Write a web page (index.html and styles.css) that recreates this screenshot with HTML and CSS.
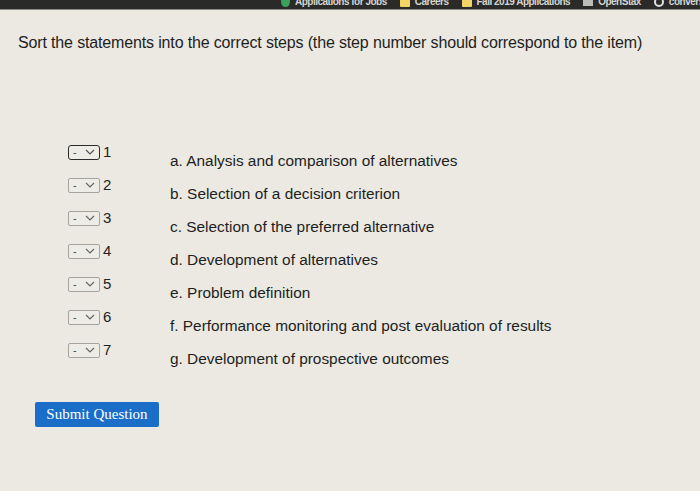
FILE: index.html
```html
<!DOCTYPE html>
<html>
<head>
<meta charset="utf-8">
<link rel="stylesheet" href="styles.css">
</head>
<body>
<div class="bookmarks">
  <div class="bm-inner">
    <span class="bm"><span class="ic-green"></span>Applications for Jobs</span>
    <span class="bm"><span class="ic-folder"></span>Careers</span>
    <span class="bm"><span class="ic-folder"></span>Fall 2019 Applications</span>
    <span class="bm"><span class="ic-grey"></span>OpenStax</span>
    <span class="bm"><span class="ic-circle"></span>conversion</span>
  </div>
</div>
<div class="page">
  <h1 class="title">Sort the statements into the correct steps (the step number should correspond to the item)</h1>
  <div class="sorter">
    <div class="steps">
      <div class="step"><span class="sel focus"><span class="dash">-</span><svg class="chev" viewBox="0 0 10 6"><path d="M1 1 L5 5 L9 1" fill="none" stroke="#555" stroke-width="1.2"/></svg></span><span class="num">1</span></div>
      <div class="step"><span class="sel"><span class="dash">-</span><svg class="chev" viewBox="0 0 10 6"><path d="M1 1 L5 5 L9 1" fill="none" stroke="#666" stroke-width="1.2"/></svg></span><span class="num">2</span></div>
      <div class="step"><span class="sel"><span class="dash">-</span><svg class="chev" viewBox="0 0 10 6"><path d="M1 1 L5 5 L9 1" fill="none" stroke="#666" stroke-width="1.2"/></svg></span><span class="num">3</span></div>
      <div class="step"><span class="sel"><span class="dash">-</span><svg class="chev" viewBox="0 0 10 6"><path d="M1 1 L5 5 L9 1" fill="none" stroke="#666" stroke-width="1.2"/></svg></span><span class="num">4</span></div>
      <div class="step"><span class="sel"><span class="dash">-</span><svg class="chev" viewBox="0 0 10 6"><path d="M1 1 L5 5 L9 1" fill="none" stroke="#666" stroke-width="1.2"/></svg></span><span class="num">5</span></div>
      <div class="step"><span class="sel"><span class="dash">-</span><svg class="chev" viewBox="0 0 10 6"><path d="M1 1 L5 5 L9 1" fill="none" stroke="#666" stroke-width="1.2"/></svg></span><span class="num">6</span></div>
      <div class="step"><span class="sel"><span class="dash">-</span><svg class="chev" viewBox="0 0 10 6"><path d="M1 1 L5 5 L9 1" fill="none" stroke="#666" stroke-width="1.2"/></svg></span><span class="num">7</span></div>
    </div>
    <div class="items">
      <div class="item">a. Analysis and comparison of alternatives</div>
      <div class="item">b. Selection of a decision criterion</div>
      <div class="item">c. Selection of the preferred alternative</div>
      <div class="item">d. Development of alternatives</div>
      <div class="item">e. Problem definition</div>
      <div class="item">f. Performance monitoring and post evaluation of results</div>
      <div class="item">g. Development of prospective outcomes</div>
    </div>
  </div>
  <button class="submit">Submit Question</button>
</div>
</body>
</html>
```
FILE: styles.css
```css
html, body {
  margin: 0;
  padding: 0;
}
body {
  background: #ebe9e2;
  font-family: "Liberation Sans", Arial, sans-serif;
  color: #1e1e1e;
  width: 700px;
  height: 491px;
  overflow: hidden;
}
.bookmarks {
  height: 9px;
  background: #2a2a28;
  overflow: hidden;
  border-bottom: 1px solid #8a8985;
}
.bm-inner {
  display: flex;
  gap: 13px;
  padding-left: 281px;
  margin-top: -4px;
  white-space: nowrap;
}
.bm {
  display: inline-flex;
  align-items: center;
  gap: 5px;
  color: #d4d4d0;
  font-size: 10px;
  font-weight: bold;
  line-height: 11px;
  letter-spacing: -0.5px;
}
.ic-green, .ic-folder, .ic-grey, .ic-circle {
  display: inline-block;
  width: 10px;
  height: 11px;
}
.ic-green { background: #3aa35a; border-radius: 50%; width: 9px; }
.ic-folder { background: #f2d564; border-radius: 1px; }
.ic-grey { background: #bdbcb6; height: 8px; }
.ic-circle { box-sizing: border-box; border: 2px solid #e0e0dc; border-radius: 50%; width: 10px; height: 10px; }

.page {
  padding: 22px 18px 0 18px;
}
.title {
  margin: 0;
  font-size: 16px;
  font-weight: normal;
  line-height: 22px;
  letter-spacing: -0.15px;
  white-space: nowrap;
}
.sorter {
  display: flex;
  margin-top: 90px;
  padding-left: 50px;
}
.steps {
  display: flex;
  flex-direction: column;
  gap: 17px;
  width: 102px;
}
.step {
  display: flex;
  align-items: center;
  height: 16px;
  gap: 3px;
}
.sel {
  display: inline-flex;
  align-items: center;
  justify-content: space-between;
  box-sizing: border-box;
  width: 32px;
  height: 15px;
  border: 1px solid #a5a39d;
  border-radius: 2px;
  background: #eeece6;
  padding: 0 4px 0 4px;
  font-size: 11px;
  color: #444;
}
.sel.focus {
  border: 1.5px solid #2b2b2b;
  border-radius: 3px;
}
.dash { line-height: 13px; }
.chev { width: 10px; height: 6px; }
.num {
  font-size: 15px;
  line-height: 16px;
  color: #222;
}
.items {
  display: flex;
  flex-direction: column;
  gap: 13px;
  padding-top: 7px;
}
.item {
  font-size: 15.4px;
  line-height: 20px;
  color: #1e1e1e;
}
.submit {
  display: block;
  margin: 33px 0 0 17px;
  width: 124px;
  height: 25px;
  padding: 0;
  border: none;
  border-radius: 2px;
  background: #1a6ec8;
  color: #fff;
  font-family: "Liberation Serif", "Times New Roman", serif;
  font-size: 15px;
}
```
